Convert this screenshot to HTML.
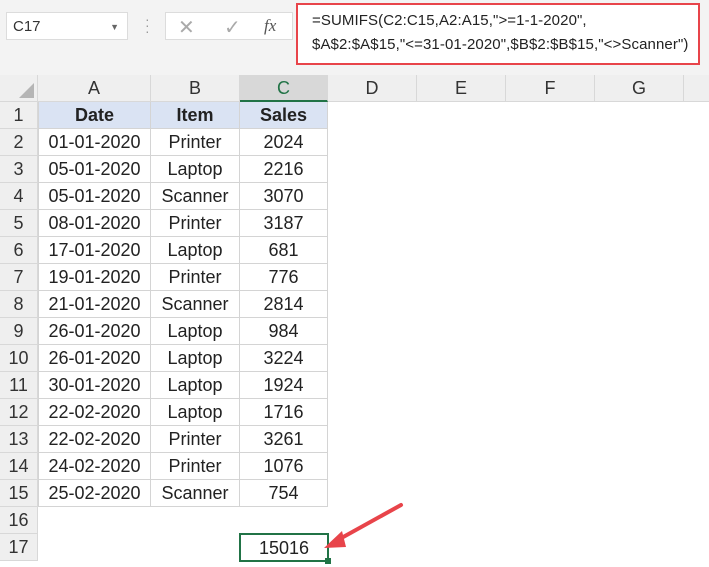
<html><head><style>
body{margin:0;width:709px;height:567px;background:#fff;font-family:"Liberation Sans",sans-serif;position:relative;overflow:hidden}
.top{position:absolute;left:0;top:0;width:709px;height:75px;background:#f3f3f3}
.nb{position:absolute;left:6px;top:12px;width:122px;height:28px;background:#fff;border:1px solid #dcdcdc;font-size:15px;line-height:28px;padding-left:6px;box-sizing:border-box;color:#333}
.fx{position:absolute;left:165px;top:12px;width:128px;height:28px;background:#fff;border:1px solid #dcdcdc;box-sizing:border-box}
.fb{position:absolute;left:296px;top:3px;width:404px;height:62px;background:#fff;border:2px solid #e8444a;box-sizing:border-box;font-size:15px;line-height:24px;padding:4px 0 0 14px;color:#222;white-space:nowrap;letter-spacing:0.1px}
.c{position:absolute;box-sizing:border-box;text-align:center;font-size:18px;color:#222;line-height:27px}
.h{background:#efefef;color:#333;border-right:1px solid #d8d8d8;border-bottom:1px solid #d8d8d8}
.g{border-right:1px solid #d4d4d4;border-bottom:1px solid #d4d4d4}
</style></head><body>
<div class="top"></div>
<div class="nb">C17<span style="position:absolute;right:8px;top:0;font-size:9px;color:#666">▼</span></div>
<div style="position:absolute;left:145px;top:16px;color:#999;font-size:14px;line-height:6px">·<br>·<br>·</div>
<div class="fx"><span style="position:absolute;left:12px;top:2px;color:#aaa;font-size:20px">✕</span><span style="position:absolute;left:58px;top:2px;color:#aaa;font-size:20px">✓</span><span style="position:absolute;left:98px;top:3px;color:#555;font-size:17px;font-style:italic;font-family:'Liberation Serif',serif">fx</span></div>
<div class="fb">=SUMIFS(C2:C15,A2:A15,"&gt;=1-1-2020",<br>$A$2:$A$15,"&lt;=31-01-2020",$B$2:$B$15,"&lt;&gt;Scanner")</div>
<div id="g"></div>
<script>
var cols=[38,151,240,328,417,506,595,684],L="ABCDEFG",o="";
o+='<div class="c h" style="left:0;top:75px;width:38px;height:27px"><svg width="38" height="27"><polygon points="34,8 34,23 19,23" fill="#b5b5b5"/></svg></div>';
for(var i=0;i<7;i++){o+='<div class="c h" style="left:'+cols[i]+'px;top:75px;width:'+(cols[i+1]-cols[i])+'px;height:27px;'+(i==2?'background:#d8d8d8;border-bottom:2px solid #217346;color:#217346':'')+'">'+L[i]+'</div>';}
o+='<div class="c h" style="left:684px;top:75px;width:25px;height:27px;border-right:0"></div>';
var d=[["Date","Item","Sales"],["01-01-2020","Printer",2024],["05-01-2020","Laptop",2216],["05-01-2020","Scanner",3070],["08-01-2020","Printer",3187],["17-01-2020","Laptop",681],["19-01-2020","Printer",776],["21-01-2020","Scanner",2814],["26-01-2020","Laptop",984],["26-01-2020","Laptop",3224],["30-01-2020","Laptop",1924],["22-02-2020","Laptop",1716],["22-02-2020","Printer",3261],["24-02-2020","Printer",1076],["25-02-2020","Scanner",754]];
for(var r=0;r<17;r++){var y=102+r*27;
o+='<div class="c h" style="left:0;top:'+y+'px;width:38px;height:27px">'+(r+1)+'</div>';
if(r<15){for(var k=0;k<3;k++){o+='<div class="c g" style="left:'+cols[k]+'px;top:'+y+'px;width:'+(cols[k+1]-cols[k])+'px;height:27px;'+(r==0?'background:#dae3f3;font-weight:bold;':'')+(k==0?'border-left:1px solid #d4d4d4;':'')+'">'+d[r][k]+'</div>';}}}
o+='<div class="c" style="left:239px;top:533px;width:90px;height:29px;border:2px solid #217346">15016</div><div style="position:absolute;left:325px;top:558px;width:6px;height:6px;background:#217346"></div>';
document.getElementById("g").innerHTML=o;
</script>
<svg style="position:absolute;left:0;top:0" width="709" height="567"><line x1="401" y1="505" x2="336" y2="541" stroke="#e8444a" stroke-width="4" stroke-linecap="round"/><polygon points="324,548 342,531 346,547" fill="#e8444a"/></svg>
</body></html>
